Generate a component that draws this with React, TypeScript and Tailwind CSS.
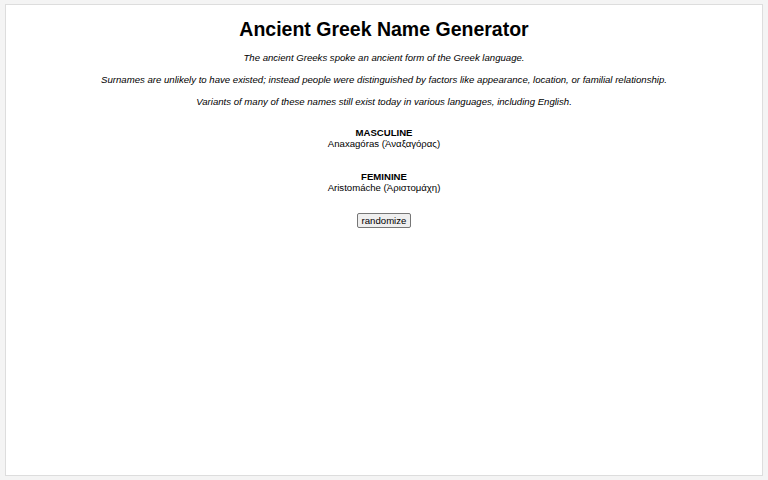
import React, { useState } from 'react';

const MASC = [
  'Anaxagóras (Ἀναξαγόρας)',
  'Periklês (Περικλῆς)',
  'Themistoklês (Θεμιστοκλῆς)',
];
const FEM = [
  'Aristomáche (Ἀριστομάχη)',
  'Kleopátra (Κλεοπάτρα)',
  'Theodṓra (Θεοδώρα)',
];

const App: React.FC = () => {
  const [idx, setIdx] = useState({ m: 0, f: 0 });

  const randomize = () => {
    setIdx({
      m: Math.floor(Math.random() * MASC.length),
      f: Math.floor(Math.random() * FEM.length),
    });
  };

  return (
    <div className="w-[768px] h-[480px] bg-[#f4f4f4] pt-[4px] px-[5px] font-['Liberation_Sans',Arial,sans-serif] text-black">
      <div className="h-[472px] bg-white border border-[#dddddd] flex flex-col items-center text-center">
        <h1 className="mt-[12px] text-[19.5px] leading-[24px] font-bold">Ancient Greek Name Generator</h1>
        <div className="mt-[11px] flex flex-col gap-[10px] text-[9.6px] leading-[12px] italic">
          <p>The ancient Greeks spoke an ancient form of the Greek language.</p>
          <p>Surnames are unlikely to have existed; instead people were distinguished by factors like appearance, location, or familial relationship.</p>
          <p>Variants of many of these names still exist today in various languages, including English.</p>
        </div>
        <div className="mt-[19px] text-[9.6px] leading-[11px]">
          <div className="font-bold">MASCULINE</div>
          <div>{MASC[idx.m]}</div>
        </div>
        <div className="mt-[22px] text-[9.6px] leading-[11px]">
          <div className="font-bold">FEMININE</div>
          <div>{FEM[idx.f]}</div>
        </div>
        <button
          onClick={randomize}
          className="mt-[20px] h-[15px] px-[4px] text-[9.6px] leading-[12px] bg-[#efefef] border border-[#767676] rounded-[2px]"
        >
          randomize
        </button>
      </div>
    </div>
  );
};

export default App;
